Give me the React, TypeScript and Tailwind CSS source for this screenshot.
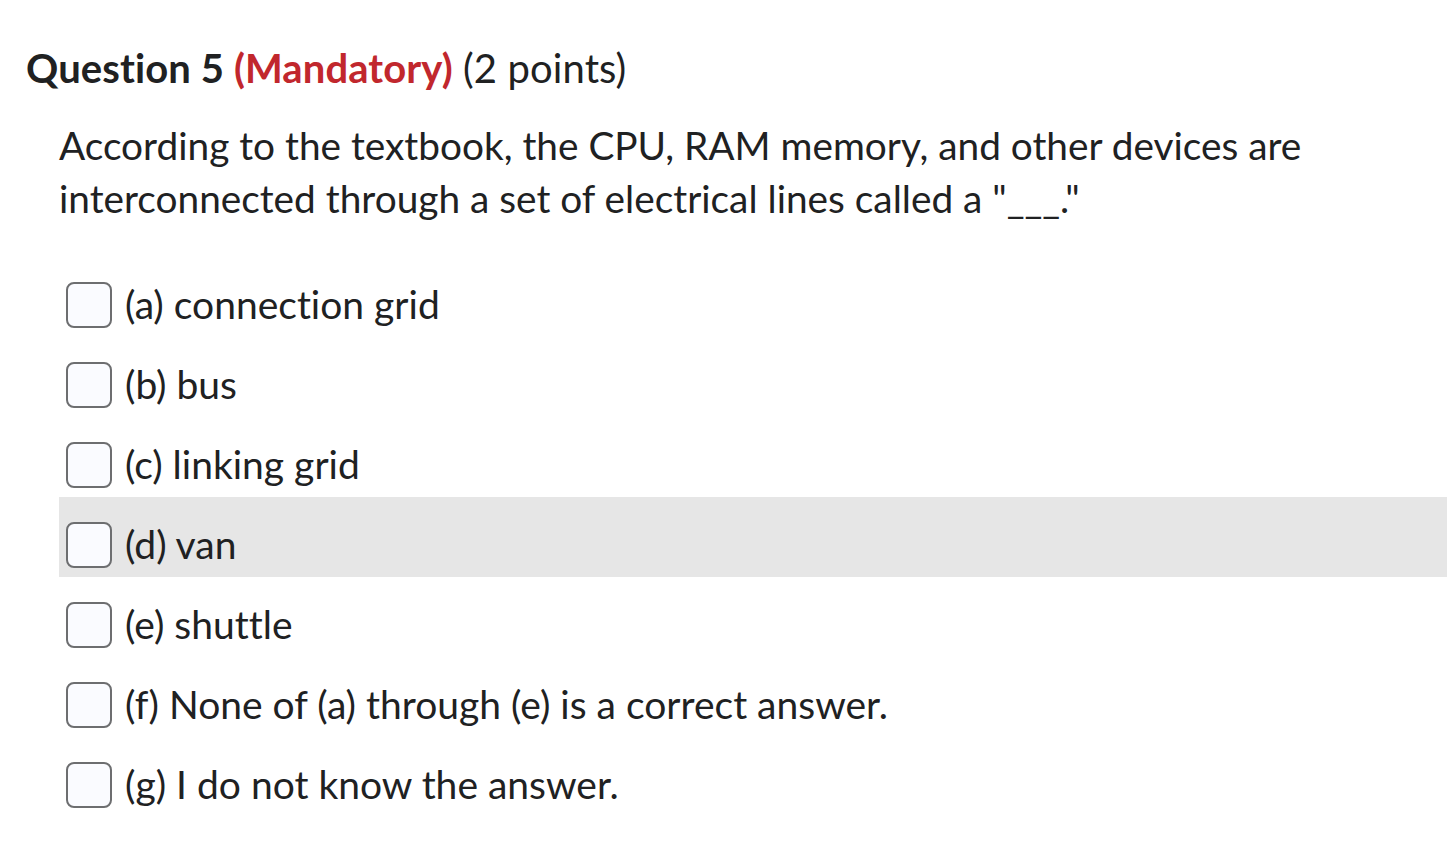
const options = [
  '(a) connection grid',
  '(b) bus',
  '(c) linking grid',
  '(d) van',
  '(e) shuttle',
  '(f) None of (a) through (e) is a correct answer.',
  '(g) I do not know the answer.',
]

export default function App() {
  return (
    <div className="min-h-screen bg-white text-[#202122] font-['Lato',sans-serif] [font-variant-ligatures:none]">
      <h2 className="pl-[26px] pt-[44px] text-[40px] leading-[48px] tracking-[0.1px]">
        <span className="font-bold">Question 5 </span>
        <span className="font-bold text-[#c1272d]">(Mandatory)</span>
        <span> (2 points)</span>
      </h2>
      <div className="pl-[59px]">
        <p className="mt-[27px] text-[38.8px] leading-[53px]">
          According to the textbook, the CPU, RAM memory, and other devices are
          <br />
          interconnected through a set of electrical lines called a "___."
        </p>
        <div className="mt-[32px]">
          {options.map((opt, i) => (
            <label
              key={opt}
              className={`flex items-start gap-[13px] h-[80px] pt-[25px] pl-[7px] ${i === 3 ? 'bg-[#e6e6e6]' : ''}`}
            >
              <span className="w-[46px] h-[46px] shrink-0 rounded-[8px] border-2 border-[#6d6e70] bg-[#fafbff]" />
              <span className="text-[39px] leading-[44px]">{opt}</span>
            </label>
          ))}
        </div>
      </div>
    </div>
  )
}
